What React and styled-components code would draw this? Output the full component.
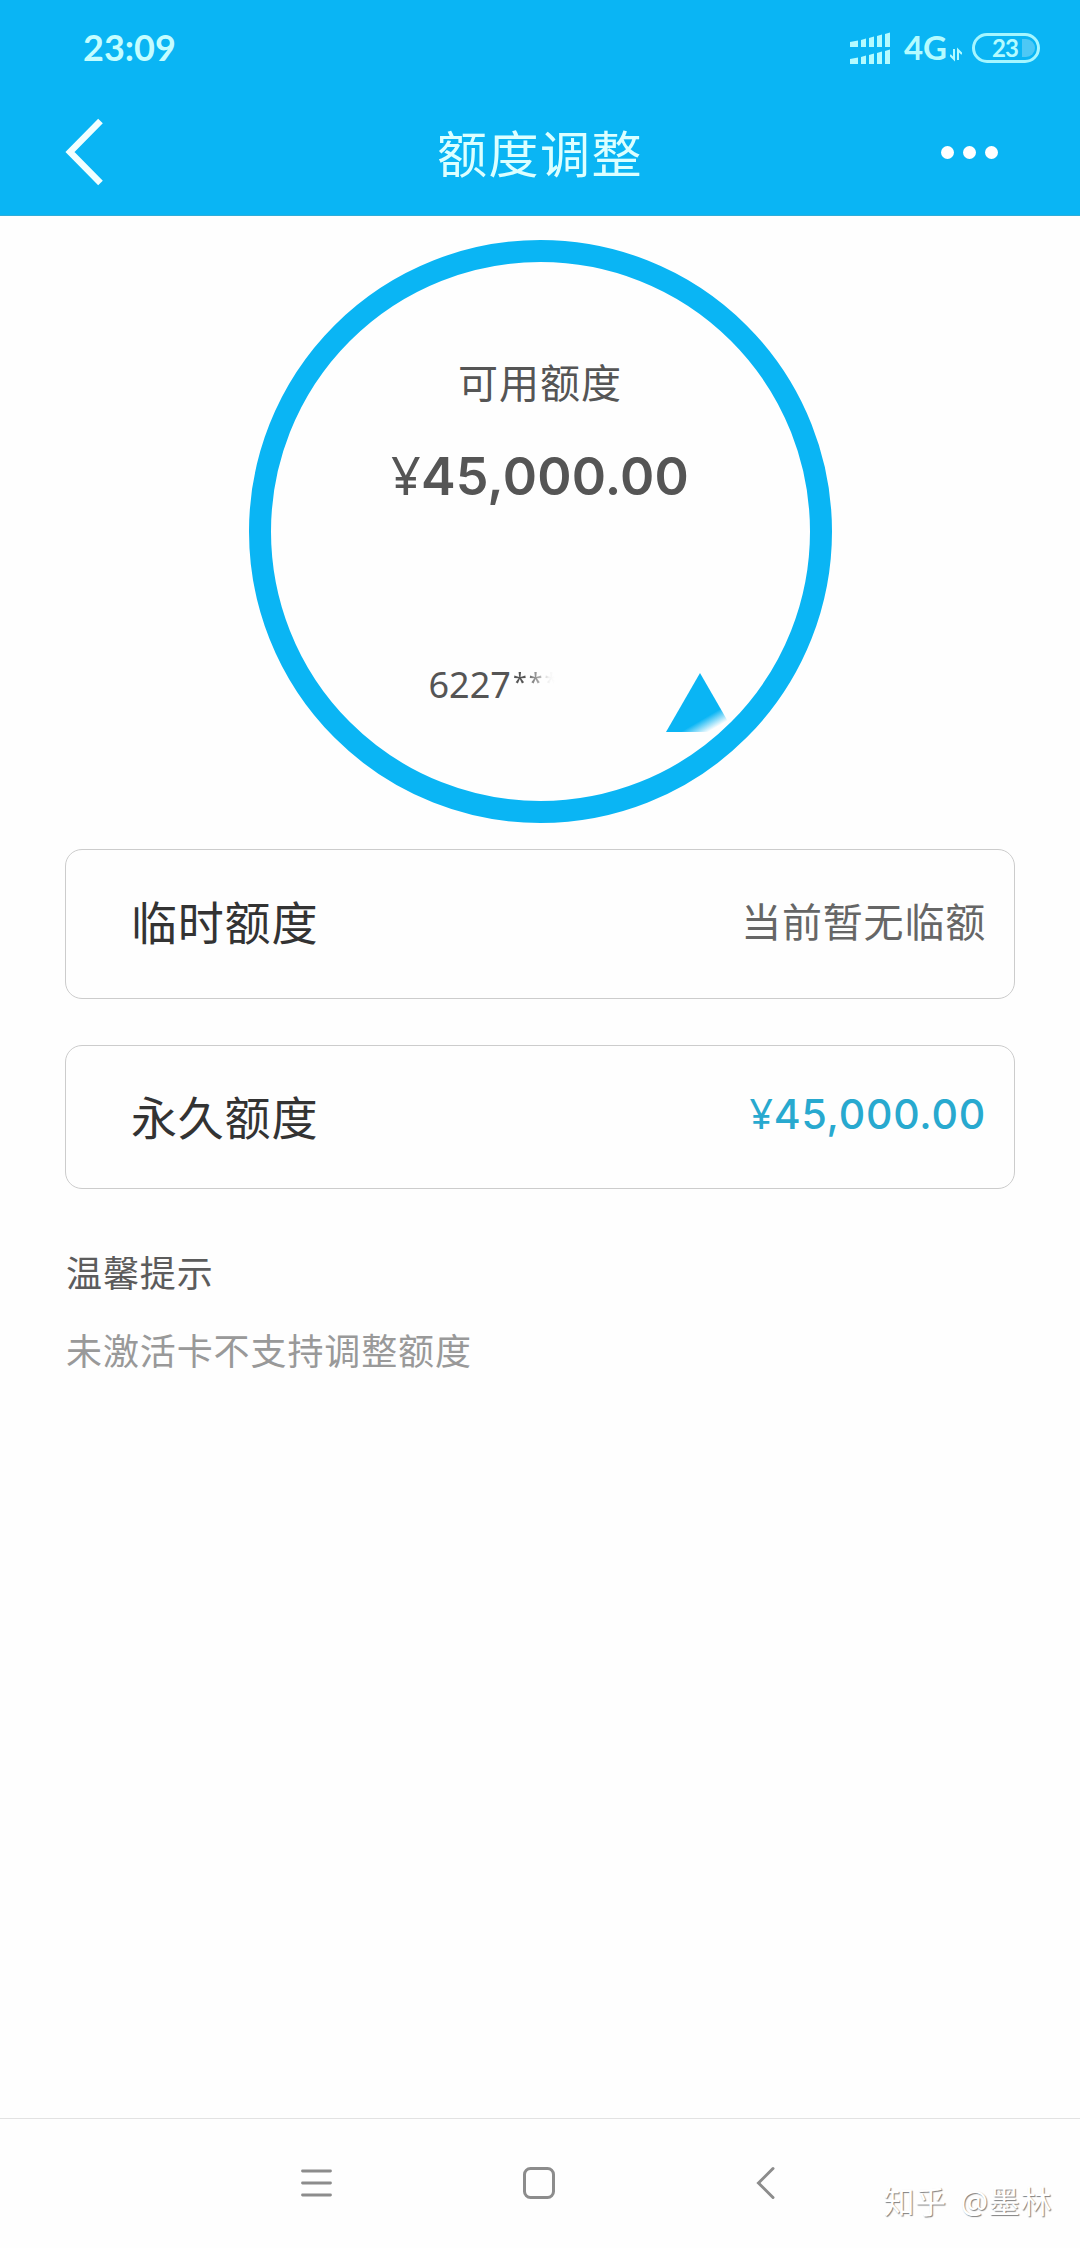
import styled, { createGlobalStyle } from 'styled-components';

const GlobalStyle = createGlobalStyle`
    * {
        box-sizing: border-box;
    }
    body {
        margin: 0;
        background: #fefefe;
        font-family: 'Noto Sans', 'Noto Sans CJK SC', sans-serif;
    }
`;

const Page = styled.div`
    position: relative;
    display: flex;
    flex-direction: column;
    width: 1080px;
    height: 2248px;
    overflow: hidden;
`;

const Header = styled.header`
    height: 216px;
    background: #0ab5f4;
    border-bottom: 1px solid #2fadd9;
    color: #dcffff;
`;

const StatusBar = styled.div`
    display: flex;
    align-items: center;
    justify-content: space-between;
    height: 95px;
    padding: 0 40px 0 83px;
`;

const Time = styled.span`
    font-family: Lato, sans-serif;
    font-size: 36px;
    font-weight: 700;
    line-height: 40px;
    padding-bottom: 2px;
    color: #c4fdff;
`;

const StatusIcons = styled.div`
    display: flex;
    align-items: center;
    height: 32px;
    color: #b4fbff;
`;

const Network = styled.span`
    margin: 0 3px 0 13px;
    font-family: Lato, sans-serif;
    font-size: 33px;
    font-weight: 700;
    line-height: 32px;
    padding-bottom: 2px;
`;

const Battery = styled.div`
    display: flex;
    align-items: center;
    width: 68px;
    height: 30px;
    margin-left: 10px;
    padding-left: 17px;
    border: 3px solid #a5f6ff;
    border-radius: 15px;
    font-family: Lato, sans-serif;
    font-size: 24px;
    font-weight: 700;
    line-height: 24px;
    letter-spacing: -1px;
`;

const BatteryRest = styled.span`
    width: 13px;
    height: 18px;
    margin-left: 4px;
    border-radius: 0 9px 9px 0;
    background: #4ec8f5;
`;

const TitleBar = styled.div`
    display: grid;
    grid-template-columns: 200px 1fr 200px;
    align-items: center;
    height: 114px;
`;

const BackButton = styled.button`
    display: flex;
    padding: 0 0 0 63px;
    border: none;
    background: none;
    color: #f2ffff;
`;

const Title = styled.h1`
    margin: 4px 0 0;
    font-size: 50px;
    font-weight: 400;
    line-height: 60px;
    letter-spacing: 1.5px;
    text-align: center;
`;

const MoreButton = styled.button`
    display: flex;
    gap: 9px;
    justify-content: flex-end;
    padding: 0 82px 0 0;
    border: none;
    background: none;
`;

const Dot = styled.span`
    width: 13px;
    height: 13px;
    border-radius: 50%;
    background: white;
`;

const Ring = styled.section`
    position: relative;
    display: flex;
    flex-direction: column;
    align-items: center;
    width: 583px;
    height: 583px;
    margin: 24px auto 0;
    border: 22px solid #0ab5f4;
    border-radius: 50%;
    color: #555;
`;

const RingLabel = styled.div`
    margin-top: 91px;
    font-size: 40px;
    line-height: 60px;
    letter-spacing: 1px;
`;

const Money = styled.div`
    display: flex;
    align-items: baseline;
    font-family: Inter, sans-serif;
    white-space: nowrap;
`;

const TotalMoney = styled(Money)`
    margin-top: 32px;
    font-size: 52px;
    font-weight: 600;
    line-height: 60px;
    letter-spacing: 0.2px;
`;

const Yen = styled.span`
    font-family: 'Noto Sans', sans-serif;
    font-weight: 400;
`;

const CardNumber = styled.div`
    display: flex;
    align-self: flex-start;
    margin: 153px 0 0 158px;
    font-size: 36px;
    line-height: 50px;
`;

const Mask = styled.span`
    margin-left: 2px;
    font-size: 25px;
    line-height: 43px;
    letter-spacing: 2px;
    color: transparent;
    background: linear-gradient(90deg, #555 12px, #aaa 26px, #f4f4f4 36px, #fefefe 42px);
    background-clip: text;
`;

const Corner = styled.svg`
    position: absolute;
    left: 395px;
    top: 411px;
`;

const Cards = styled.div`
    display: flex;
    flex-direction: column;
    gap: 46px;
    margin: 26px 65px 0;
`;

const Card = styled.div`
    display: flex;
    align-items: center;
    justify-content: space-between;
    height: ${(props) => props.$height}px;
    padding: 0 28px ${(props) => props.$lift || 0}px 65px;
    border: 1px solid #ccc;
    border-radius: 17px;
`;

const CardLabel = styled.span`
    font-size: 46px;
    line-height: 60px;
    letter-spacing: 0.8px;
    color: #333;
`;

const CardValue = styled.span`
    font-size: 40px;
    line-height: 60px;
    letter-spacing: 0.8px;
    color: #666;
`;

const CardMoney = styled(Money)`
    font-size: 41px;
    font-weight: 500;
    line-height: 50px;
    letter-spacing: 0.8px;
    color: #28a9cf;
    padding-bottom: 8px;
`;

const Tips = styled.section`
    margin: 60px 66px 0;
    font-size: 36px;
    line-height: 50px;
    letter-spacing: 0.9px;
`;

const TipsTitle = styled.div`
    color: #5c5c5c;
`;

const TipsText = styled.div`
    margin-top: 28px;
    color: #999;
`;

const NavBar = styled.nav`
    display: flex;
    align-items: center;
    gap: 190px;
    height: 130px;
    margin-top: auto;
    padding: 0 0 2px 300px;
    border-top: 1px solid #e2e2e2;
    color: #8c8c8c;
`;

const Watermark = styled.div`
    position: absolute;
    right: 28px;
    bottom: 25px;
    font-size: 31px;
    line-height: 44px;
    letter-spacing: 0.6px;
    word-spacing: 5px;
    color: white;
    text-shadow: 1px 1px 1px #808080;
`;

const barHeights = [5, 7, 9, 11, 13];

const SignalIcon = () => (
    <svg width="41" height="32" fill="currentColor">
        {[14, 31].map((base) =>
            barHeights.map((h, i) => (
                <path
                    key={`${base}-${i}`}
                    d={`M${i === 0 ? 0 : i * 8 + 3} ${base + 1}v${-h}l${i === 0 ? 8 : 5} -1.5v${h + 1.5}z`}
                />
            ))
        )}
    </svg>
);

const DataIcon = () => (
    <svg width="12" height="32" fill="none" stroke="currentColor" strokeWidth="2">
        <path d="M4 17v10l-4 -4M8 28v-10l4 4" />
    </svg>
);

const App = () => {
    return (
        <>
            <GlobalStyle />
            <Page>
                <Header>
                    <StatusBar>
                        <Time>23:09</Time>
                        <StatusIcons>
                            <SignalIcon />
                            <Network>4G</Network>
                            <DataIcon />
                            <Battery>
                                23
                                <BatteryRest />
                            </Battery>
                        </StatusIcons>
                    </StatusBar>
                    <TitleBar>
                        <BackButton>
                            <svg width="42" height="68" fill="none" stroke="currentColor" strokeWidth="6.5">
                                <path d="M37.5 3L7 34l30.5 31" />
                            </svg>
                        </BackButton>
                        <Title>额度调整</Title>
                        <MoreButton>
                            <Dot />
                            <Dot />
                            <Dot />
                        </MoreButton>
                    </TitleBar>
                </Header>
                <Ring>
                    <RingLabel>可用额度</RingLabel>
                    <TotalMoney>
                        <Yen>¥</Yen>45,000.00
                    </TotalMoney>
                    <CardNumber>
                        6227<Mask>***</Mask>
                    </CardNumber>
                    <Corner width="70" height="60">
                        <defs>
                            <linearGradient id="fade" gradientUnits="userSpaceOnUse" x1="30" y1="50" x2="37" y2="62">
                                <stop offset="0" stopColor="#0ab5f4" />
                                <stop offset="1" stopColor="#0ab5f4" stopOpacity="0" />
                            </linearGradient>
                        </defs>
                        <path d="M34 0L68 59H0z" fill="url(#fade)" />
                    </Corner>
                </Ring>
                <Cards>
                    <Card $height={150} $lift={5}>
                        <CardLabel>临时额度</CardLabel>
                        <CardValue>当前暂无临额</CardValue>
                    </Card>
                    <Card $height={144}>
                        <CardLabel>永久额度</CardLabel>
                        <CardMoney>
                            <Yen>¥</Yen>45,000.00
                        </CardMoney>
                    </Card>
                </Cards>
                <Tips>
                    <TipsTitle>温馨提示</TipsTitle>
                    <TipsText>未激活卡不支持调整额度</TipsText>
                </Tips>
                <NavBar>
                    <svg width="32" height="34" stroke="currentColor" strokeWidth="2.8" strokeLinecap="round">
                        <path d="M2.5 5h28M2.5 17h28M2.5 29h28" />
                    </svg>
                    <svg width="34" height="34" fill="none" stroke="currentColor" strokeWidth="3">
                        <rect x="2.5" y="2.5" width="29" height="29" rx="6" />
                    </svg>
                    <svg width="34" height="34" fill="none" stroke="currentColor" strokeWidth="3" strokeLinecap="round">
                        <path d="M27 2.5L12.5 17L27 31.5" />
                    </svg>
                </NavBar>
                <Watermark>知乎 @墨林</Watermark>
            </Page>
        </>
    );
};

export default App;
